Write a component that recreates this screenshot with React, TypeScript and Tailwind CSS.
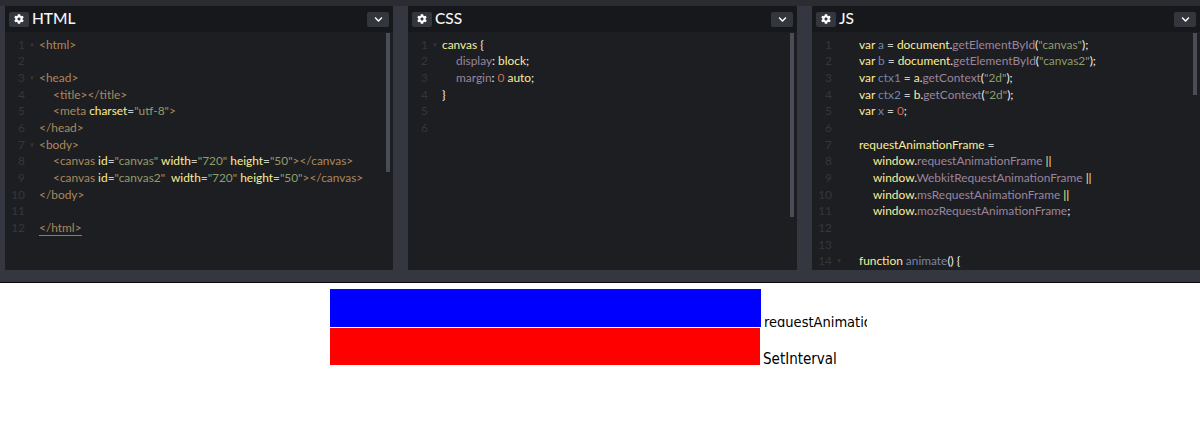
import { FaCog, FaChevronDown } from 'react-icons/fa';

const tag = 'text-[#ac885b]';
const attr = 'text-[#f9ee98]';
const str = 'text-[#8f9d6a]';
const plain = 'text-[#cacbcc]';
const prop = 'text-[#9b859d]';
const vari = 'text-[#7587a6]';
const num = 'text-[#cf6a4c]';
const white = 'text-[#f5f5f5]';

type Tok = [string, string];
type Line = { indent?: number; toks?: Tok[]; fold?: boolean };

const indents = ['', 'pl-[14px]', 'pl-[28px]'];

const htmlLines: Line[] = [
  { fold: true, toks: [['<html>', tag]] },
  {},
  { fold: true, toks: [['<head>', tag]] },
  { indent: 1, toks: [['<title></title>', tag]] },
  { indent: 1, toks: [['<meta ', tag], ['charset', attr], ['=', plain], ['"utf-8"', str], ['>', tag]] },
  { toks: [['</head>', tag]] },
  { fold: true, toks: [['<body>', tag]] },
  { indent: 1, toks: [['<canvas ', tag], ['id', attr], ['=', plain], ['"canvas"', str], [' ', plain], ['width', attr], ['=', plain], ['"720"', str], [' ', plain], ['height', attr], ['=', plain], ['"50"', str], ['></canvas>', tag]] },
  { indent: 1, toks: [['<canvas ', tag], ['id', attr], ['=', plain], ['"canvas2"', str], ['  ', plain], ['width', attr], ['=', plain], ['"720"', str], [' ', plain], ['height', attr], ['=', plain], ['"50"', str], ['></canvas>', tag]] },
  { toks: [['</body>', tag]] },
  {},
  { toks: [['</html>', `${tag} border-b border-[#808080]`]] },
];

const cssLines: Line[] = [
  { fold: true, toks: [['canvas', attr], [' {', white]] },
  { indent: 1, toks: [['display', prop], [': ', white], ['block', attr], [';', white]] },
  { indent: 1, toks: [['margin', prop], [': ', white], ['0', num], [' ', white], ['auto', attr], [';', white]] },
  { toks: [['}', white]] },
  {},
  {},
];

const jsLines: Line[] = [
  { toks: [['var ', attr], ['a', vari], [' = ', plain], ['document', attr], ['.', white], ['getElementById', prop], ['(', white], ['"canvas"', str], [');', white]] },
  { toks: [['var ', attr], ['b', vari], [' = ', plain], ['document', attr], ['.', white], ['getElementById', prop], ['(', white], ['"canvas2"', str], [');', white]] },
  { toks: [['var ', attr], ['ctx1', vari], [' = ', plain], ['a', attr], ['.', white], ['getContext', prop], ['(', white], ['"2d"', str], [');', white]] },
  { toks: [['var ', attr], ['ctx2', vari], [' = ', plain], ['b', attr], ['.', white], ['getContext', prop], ['(', white], ['"2d"', str], [');', white]] },
  { toks: [['var ', attr], ['x', vari], [' = ', plain], ['0', num], [';', white]] },
  {},
  { toks: [['requestAnimationFrame', attr], [' =', plain]] },
  { indent: 1, toks: [['window', attr], ['.', white], ['requestAnimationFrame', prop], [' ', plain], ['||', attr]] },
  { indent: 1, toks: [['window', attr], ['.', white], ['WebkitRequestAnimationFrame', prop], [' ', plain], ['||', attr]] },
  { indent: 1, toks: [['window', attr], ['.', white], ['msRequestAnimationFrame', prop], [' ', plain], ['||', attr]] },
  { indent: 1, toks: [['window', attr], ['.', white], ['mozRequestAnimationFrame', prop], [';', white]] },
  {},
  {},
  { fold: true, toks: [['function ', attr], ['animate', vari], ['() {', white]] },
];

function Panel({ title, lines, codeIndent, panelClass, thumbClass }: {
  title: string;
  lines: Line[];
  codeIndent: string;
  panelClass: string;
  thumbClass: string;
}) {
  return (
    <section className={`relative flex flex-col overflow-hidden bg-[#1d1e22] ${panelClass}`}>
      <header className="flex h-[26px] shrink-0 items-center justify-between bg-[#17181c] pl-1 pr-1">
        <div className="flex items-center gap-[3px]">
          <span className="flex h-[15px] w-5 items-center justify-center rounded-[2px] bg-[#34363e] text-white">
            <FaCog size={10} />
          </span>
          <h2 className="text-[15.5px] leading-none font-medium text-[#f5f5f5]">{title}</h2>
        </div>
        <span className="flex h-[15px] w-[22px] items-center justify-center rounded-[2px] bg-[#34363e] text-white">
          <FaChevronDown size={9} />
        </span>
      </header>
      <div className="pt-[4.5px] text-[11.9px] leading-[16.7px]">
        {lines.map((line, i) => (
          <div key={i} className="flex h-[16.7px] whitespace-pre">
            <span className="w-[20px] shrink-0 text-right text-[#34363e]">{i + 1}</span>
            <span className="flex w-[14px] shrink-0 items-center justify-center text-[6px] text-[#34363e]">
              {line.fold ? '▼' : ''}
            </span>
            <div className={`${codeIndent} ${indents[line.indent ?? 0]}`}>
              {line.toks?.map(([text, color], j) => (
                <span key={j} className={color}>{text}</span>
              ))}
            </div>
          </div>
        ))}
      </div>
      <div className={`absolute top-[27px] right-[3px] w-1 bg-[#4a4d57] ${thumbClass}`} />
    </section>
  );
}

export default function App() {
  return (
    <div className="h-[448px] w-[1200px] overflow-hidden bg-white font-['Lato',sans-serif]">
      <div className="flex h-[283px] flex-col border-b border-[#0a0a0a] bg-[#343640] pt-[6px]">
        <div className="-mt-[6px] h-[6px] shrink-0 bg-[#2a2c32]" />
        <div className="flex h-[264px] shrink-0 gap-[15px] pl-[5px]">
          <Panel title="HTML" lines={htmlLines} codeIndent="" panelClass="w-[388px]" thumbClass="h-[139px]" />
          <Panel title="CSS" lines={cssLines} codeIndent="" panelClass="w-[389px]" thumbClass="h-[184px]" />
          <Panel title="JS" lines={jsLines} codeIndent="ml-[13px]" panelClass="w-[388px]" thumbClass="h-[62px]" />
        </div>
      </div>
      <div className="pt-[6px] pl-[330px] font-['DejaVu_Sans',sans-serif] text-[15px] text-black [font-stretch:condensed]">
        <div className="flex h-[39px] border-b border-white">
          <div className="h-[38px] w-[431px] bg-[#0000ff]" />
          <div className="ml-[3px] h-[38px] w-[103px] overflow-hidden pt-[22px] text-[14.5px] leading-[22px] whitespace-pre">requestAnimationFrame</div>
        </div>
        <div className="flex h-[37px]">
          <div className="h-[37px] w-[430px] bg-[#ff0000]" />
          <div className="ml-[3px] h-[37px] overflow-hidden pt-[20px] leading-[22px] whitespace-pre">SetInterval</div>
        </div>
      </div>
    </div>
  );
}
